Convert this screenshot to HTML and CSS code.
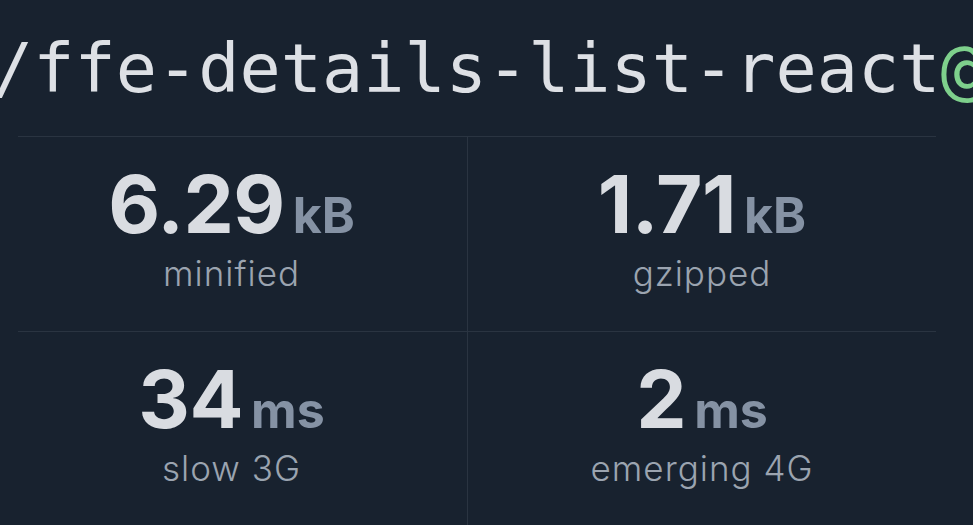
FILE: index.html
```html
<!DOCTYPE html>
<html lang="en">
<head>
<meta charset="utf-8">
<title>Bundle size</title>
<link rel="stylesheet" href="styles.css">
</head>
<body>
<div class="page">
  <h1 class="title"><span class="name">/ffe-details-list-react</span><span class="at">@</span></h1>
  <div class="stats">
    <div class="cell left top">
      <div class="value"><span class="num">6.29</span><span class="unit">kB</span></div>
      <div class="label">minified</div>
    </div>
    <div class="cell top">
      <div class="value"><span class="num">1.71</span><span class="unit">kB</span></div>
      <div class="label">gzipped</div>
    </div>
    <div class="cell left">
      <div class="value"><span class="num">34</span><span class="unit">ms</span></div>
      <div class="label">slow 3G</div>
    </div>
    <div class="cell">
      <div class="value"><span class="num">2</span><span class="unit">ms</span></div>
      <div class="label">emerging 4G</div>
    </div>
  </div>
</div>
</body>
</html>
```

FILE: styles.css
```css
html, body {
  margin: 0;
  padding: 0;
  background: #18222f;
  overflow: hidden;
}
.page {
  width: 973px;
  height: 525px;
  overflow: hidden;
}
.title {
  margin: 0;
  padding-top: 30px;
  margin-left: -8px;
  white-space: nowrap;
  font-family: "DejaVu Sans Mono", monospace;
  font-weight: 400;
  font-size: 68.5px;
  line-height: 76px;
  color: #dde0e5;
}
.at {
  color: #7ed08c;
}
.stats {
  margin: 30px 0 0 18px;
  width: 918px;
  display: grid;
  grid-template-columns: 450px 468px;
  grid-template-rows: 195px 195px;
  border-top: 1px solid #2a3441;
}
.cell {
  display: flex;
  flex-direction: column;
  align-items: center;
  padding-top: 27px;
  font-family: Inter, "Noto Sans", sans-serif;
}
.cell.top {
  border-bottom: 1px solid #2a3441;
}
.cell.left {
  border-right: 1px solid #2a3441;
  padding-right: 22px;
}
.value {
  display: flex;
  align-items: baseline;
  line-height: 80px;
}
.num {
  font-size: 80px;
  font-weight: 700;
  color: #d9dce1;
  letter-spacing: -0.5px;
}
.unit {
  font-size: 50px;
  font-weight: 700;
  color: #8592a4;
  margin-left: 8px;
}
.label {
  font-size: 35px;
  font-weight: 300;
  letter-spacing: 1px;
  line-height: 40px;
  color: #9ba4b0;
  margin-top: -2px;
}
```
